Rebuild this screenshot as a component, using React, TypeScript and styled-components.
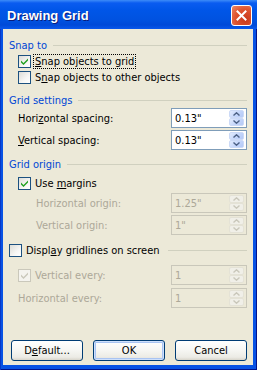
import React from "react";
import styled, {createGlobalStyle, css} from "styled-components";

const GlobalStyle = createGlobalStyle`
  html, body { margin: 0; padding: 0; background: #ffffff; }
  * { box-sizing: border-box; }
`;

const Window = styled.div`
  width: 257px;
  height: 370px;
  display: flex;
  flex-direction: column;
  background: #0752e4;
  box-shadow: inset 1px 0 0 #0838c6, inset -1px 0 0 #00138c, inset 0 -1px 0 #00138c;
  font-family: "DejaVu Sans Condensed", "DejaVu Sans", sans-serif;
  font-stretch: condensed;
  font-size: 11px;
  color: #000000;
`;

const TitleBar = styled.div`
  height: 29px;
  flex: none;
  display: flex;
  align-items: center;
  padding: 0 5px 0 7px;
  background: linear-gradient(180deg, #3d8cf8 0px, #0a5cf0 3px, #0056e8 10px, #0052e0 20px, #004ad8 25px, #0a58ec 29px);
`;

const Title = styled.div`
  flex: 1;
  color: #ffffff;
  font-family: "Liberation Sans", Arial, sans-serif;
  font-weight: bold;
  font-size: 13px;
  text-shadow: 1px 1px 0 #0a1c7a;
  padding-top: 1px;
`;

const CloseButton = styled.div`
  width: 21px;
  height: 21px;
  border: 1px solid #ffffff;
  border-radius: 3px;
  background: radial-gradient(circle at 70% 70%, #c8381a 0%, #e05530 55%, #ec8a6a 100%);
  display: flex;
  align-items: center;
  justify-content: center;
  margin-top: 1px;
`;

const Body = styled.div`
  flex: 1;
  margin: 0 4px 5px 3px;
  background: #ece9d8;
  display: flex;
  flex-direction: column;
  padding: 9px 6px 4px 6px;
`;

const GroupHeader = styled.div<{ $gap?: number }>`
  height: 14px;
  display: flex;
  align-items: center;
  margin-top: ${p => p.$gap ?? 0}px;
`;

const GroupLabel = styled.span`
  color: #0046d5;
  white-space: nowrap;
`;

const Rule = styled.div`
  flex: 1;
  height: 1px;
  background: #d0d0bf;
  margin-left: 6px;
`;

const Row = styled.div<{ $indent: number; $gap?: number; $h?: number }>`
  height: ${p => p.$h ?? 16}px;
  display: flex;
  align-items: center;
  padding-left: ${p => p.$indent}px;
  margin-top: ${p => p.$gap ?? 0}px;
`;

const Label = styled.span<{ $disabled?: boolean; $focus?: boolean }>`
  white-space: nowrap;
  color: ${p => (p.$disabled ? "#aca899" : "#000000")};
  padding: 0 1px;
  border: 1px dotted ${p => (p.$focus ? "#000000" : "transparent")};
  line-height: 13px;
`;

const Box = styled.span<{ $disabled?: boolean }>`
  width: 13px;
  height: 13px;
  flex: none;
  margin-right: 2px;
  border: 1px solid ${p => (p.$disabled ? "#cac8bb" : "#1c5180")};
  background: ${p => (p.$disabled ? "#f4f3ee" : "linear-gradient(135deg, #dcdcd7 0%, #f6f6f4 60%, #ffffff 100%)")};
  display: flex;
  align-items: center;
  justify-content: center;
`;

const SpinBox = styled.div<{ $disabled?: boolean }>`
  margin-left: auto;
  width: 76px;
  height: 20px;
  display: flex;
  align-items: center;
  padding: 1px 2px 1px 3px;
  border: 1px solid ${p => (p.$disabled ? "#c9c7ba" : "#7f9db9")};
  background: ${p => (p.$disabled ? "#ece9d8" : "#ffffff")};
  color: ${p => (p.$disabled ? "#aca899" : "#000000")};
`;

const SpinValue = styled.span`
  flex: 1;
`;

const SpinButtons = styled.div`
  width: 15px;
  height: 16px;
  display: flex;
  flex-direction: column;
  gap: 0;
`;

const SpinArrow = styled.div<{ $disabled?: boolean }>`
  flex: 1;
  display: flex;
  align-items: center;
  justify-content: center;
  border-radius: 2px;
  ${p =>
    p.$disabled
      ? css`
          background: #f0efe8;
          border: 1px solid #e4e2d6;
        `
      : css`
          background: linear-gradient(135deg, #e2ebfd 0%, #c4d6fb 55%, #b4c9f6 100%);
          border: 1px solid #ccdaf7;
        `}
`;

const ButtonRow = styled.div`
  margin-top: auto;
  display: flex;
  gap: 10px;
  padding-left: 2px;
`;

const PushButton = styled.div<{ $default?: boolean }>`
  width: 72px;
  height: 21px;
  border: 1px solid #003c74;
  border-radius: 3px;
  background: linear-gradient(180deg, #ffffff 0%, #f7f7f4 45%, #ecebe5 85%, #d8d5cb 100%);
  display: flex;
  align-items: center;
  justify-content: center;
  box-shadow: ${p => (p.$default ? "inset 0 0 0 1px #cee0fc, inset 0 0 0 2px #a9c4f2" : "none")};
`;

const Check = ({color}: { color: string }) => (
    <svg width="9" height="9" viewBox="0 0 9 9">
        <path d="M1 3.5 L3.5 6 L8 1.5 L8 3.5 L3.5 8 L1 5.5 Z" fill={color}/>
    </svg>
);

function CheckBox({checked, disabled}: { checked?: boolean; disabled?: boolean }) {
    return (
        <Box $disabled={disabled}>
            {checked && <Check color={disabled ? "#cac8bb" : "#21a121"}/>}
        </Box>
    );
}

const Chevron = ({up, color}: { up?: boolean; color: string }) => (
    <svg width="7" height="4" viewBox="0 0 7 4">
        <polyline points={up ? "0.5,3.5 3.5,0.8 6.5,3.5" : "0.5,0.5 3.5,3.2 6.5,0.5"}
                  fill="none" stroke={color} strokeWidth="1.4"/>
    </svg>
);

function Spinner({value, disabled}: { value: string; disabled?: boolean }) {
    const arrow = disabled ? "#c9c7ba" : "#4d6185";
    return (
        <SpinBox $disabled={disabled}>
            <SpinValue>{value}</SpinValue>
            <SpinButtons>
                <SpinArrow $disabled={disabled}><Chevron up color={arrow}/></SpinArrow>
                <SpinArrow $disabled={disabled}><Chevron color={arrow}/></SpinArrow>
            </SpinButtons>
        </SpinBox>
    );
}

export default function App() {
    return (
        <>
            <GlobalStyle/>
            <Window>
                <TitleBar>
                    <Title>Drawing Grid</Title>
                    <CloseButton>
                        <svg width="11" height="11" viewBox="0 0 11 11">
                            <path d="M1.5 1.5 L9.5 9.5 M9.5 1.5 L1.5 9.5" stroke="#ffffff" strokeWidth="2"
                                  strokeLinecap="square"/>
                        </svg>
                    </CloseButton>
                </TitleBar>
                <Body>
                    <GroupHeader>
                        <GroupLabel>Snap to</GroupLabel>
                        <Rule/>
                    </GroupHeader>
                    <Row $indent={9} $gap={1}>
                        <CheckBox checked/>
                        <Label $focus><u>S</u>nap objects to grid</Label>
                    </Row>
                    <Row $indent={9}>
                        <CheckBox/>
                        <Label>S<u>n</u>ap objects to other objects</Label>
                    </Row>

                    <GroupHeader $gap={8}>
                        <GroupLabel>Grid settings</GroupLabel>
                        <Rule/>
                    </GroupHeader>
                    <Row $indent={7} $gap={1} $h={20}>
                        <Label>Hori<u>z</u>ontal spacing:</Label>
                        <Spinner value={'0.13"'}/>
                    </Row>
                    <Row $indent={7} $gap={2} $h={20}>
                        <Label><u>V</u>ertical spacing:</Label>
                        <Spinner value={'0.13"'}/>
                    </Row>

                    <GroupHeader $gap={7}>
                        <GroupLabel>Grid origin</GroupLabel>
                        <Rule/>
                    </GroupHeader>
                    <Row $indent={9} $gap={4}>
                        <CheckBox checked/>
                        <Label>Use <u>m</u>argins</Label>
                    </Row>
                    <Row $indent={25} $gap={2} $h={20}>
                        <Label $disabled>Horizontal origin:</Label>
                        <Spinner value={'1.25"'} disabled/>
                    </Row>
                    <Row $indent={25} $gap={2} $h={20}>
                        <Label $disabled>Vertical origin:</Label>
                        <Spinner value={'1"'} disabled/>
                    </Row>

                    <GroupHeader $gap={8}>
                        <CheckBox/>
                        <Label>Displ<u>a</u>y gridlines on screen</Label>
                        <Rule/>
                    </GroupHeader>
                    <Row $indent={9} $gap={8} $h={20}>
                        <CheckBox checked disabled/>
                        <Label $disabled>Vertical every:</Label>
                        <Spinner value="1" disabled/>
                    </Row>
                    <Row $indent={7} $gap={3} $h={20}>
                        <Label $disabled>Horizontal every:</Label>
                        <Spinner value="1" disabled/>
                    </Row>

                    <ButtonRow>
                        <PushButton>D<u>e</u>fault...</PushButton>
                        <PushButton $default>OK</PushButton>
                        <PushButton>Cancel</PushButton>
                    </ButtonRow>
                </Body>
            </Window>
        </>
    );
}
